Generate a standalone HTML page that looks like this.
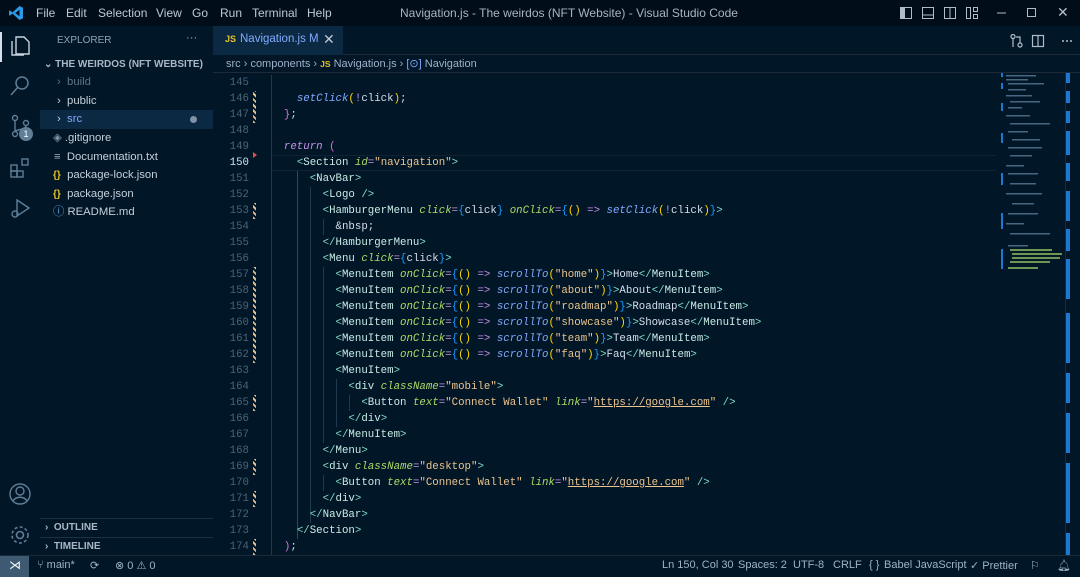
<!DOCTYPE html>
<html><head><meta charset="utf-8"><style>
*{margin:0;padding:0;box-sizing:border-box}
body{width:1080px;height:577px;overflow:hidden;background:#011627;font-family:"Liberation Sans",sans-serif;position:relative;color:#d6deeb}
.abs{position:absolute}
#title{left:0;top:0;width:1080px;height:26px;background:#010e1a;font-size:12px;color:#c0c8d2}
#title span{position:absolute;top:6px}
#act{left:0;top:26px;width:40px;height:529px;background:#011627}
#side{left:40px;top:26px;width:173px;height:529px;background:#011627;font-size:11.3px;color:#c5d0db}
#side .r{position:absolute;left:0;width:173px;height:19px;line-height:19px}
#tabs{left:213px;top:26px;width:867px;height:29px;background:#011627;border-bottom:1px solid #1c2a3a}
#crumb{left:213px;top:55px;width:867px;height:18px;font-size:11px;color:#9fb0c8}
#code{left:271px;top:75px;font-family:"Liberation Mono",monospace;font-size:10.75px;line-height:16px;white-space:pre;color:#d6deeb}
#nums{left:213px;top:75px;width:36px;text-align:right;font-family:"Liberation Mono",monospace;font-size:10.75px;line-height:16px;color:#4b6479;white-space:pre}
.p{color:#7fdbca}.t{color:#caece6}.a{color:#addb67;font-style:italic}.s{color:#ecc48d}.b{color:#179fff}.y{color:#ffd700}.k{color:#c792ea}.f{color:#82aaff;font-style:italic}.m{color:#c792ea;font-style:italic}.u{text-decoration:underline;text-decoration-color:#ecc48d}.pk{color:#da70d6}
#status{left:0;top:555px;width:1080px;height:22px;background:#011627;border-top:1px solid #1c2a3a;font-size:11px;color:#9fb3c8}
#status span{position:absolute;top:3px}
.mod{position:absolute;left:253px;width:3px;background:repeating-linear-gradient(45deg,#e2c08d 0 2px,transparent 2px 4px)}
.g{position:absolute;width:1px;background:#1f3a4f}
</style></head><body>
<div id="title" class="abs">
<svg class="abs" style="left:8px;top:5px" width="16" height="16" viewBox="0 0 16 16"><path d="M11.5 1 L15 2.7 V13.3 L11.5 15 L4.5 8.6 L1.9 10.6 L1 10.1 V5.9 L1.9 5.4 L4.5 7.4 Z M11.5 4.8 L7.3 8 L11.5 11.2 Z" fill="#2b9be8"/></svg>
<span style="left:36px">File</span><span style="left:66px">Edit</span><span style="left:98px">Selection</span><span style="left:156px">View</span><span style="left:192px">Go</span><span style="left:220px">Run</span><span style="left:252px">Terminal</span><span style="left:307px">Help</span>
<span style="left:400px;color:#a8b4c0">Navigation.js - The weirdos (NFT Website) - Visual Studio Code</span>
<svg class="abs" style="left:900px;top:7px" width="140" height="13"><g fill="none" stroke="#b0bcc8"><rect x="0.5" y="0.5" width="11" height="11"/><rect x="0.5" y="0.5" width="4" height="11" fill="#b0bcc8"/><rect x="22.5" y="0.5" width="11" height="11"/><line x1="22" y1="8" x2="34" y2="8"/><rect x="44.5" y="0.5" width="11" height="11"/><line x1="50" y1="0" x2="50" y2="12"/><rect x="66.5" y="0.5" width="4" height="11"/><rect x="73.5" y="0.5" width="4" height="4"/><rect x="73.5" y="7.5" width="4" height="4"/><line x1="97" y1="6" x2="106" y2="6"/><rect x="127.5" y="1.5" width="8" height="8"/></g></svg>
<span style="left:1057px;top:4px;font-size:14px;color:#b0bcc8">✕</span>
</div>
<div id="act" class="abs">
<div class="abs" style="left:0;top:6px;width:2px;height:30px;background:#d6deeb"></div>
<svg class="abs" style="left:9px;top:8px" width="22" height="24" fill="none" stroke="#c8d3de" stroke-width="1.4"><path d="M7 3h8l5 5v12H7z M3 7v14h12"/></svg>
<svg class="abs" style="left:9px;top:48px" width="22" height="24" fill="none" stroke="#5f7e97" stroke-width="1.5"><circle cx="13" cy="9" r="6"/><line x1="9" y1="13" x2="2" y2="21"/></svg>
<svg class="abs" style="left:9px;top:88px" width="26" height="30" fill="none" stroke="#5f7e97" stroke-width="1.4"><circle cx="6" cy="4" r="2.5"/><circle cx="6" cy="20" r="2.5"/><circle cx="17" cy="9" r="2.5"/><path d="M6 7v10 M17 12c0 4-11 3-11 6"/></svg>
<div class="abs" style="left:19px;top:101px;width:14px;height:14px;border-radius:7px;background:#5f7e97;color:#fff;font-size:9px;text-align:center;line-height:14px">1</div>
<svg class="abs" style="left:9px;top:130px" width="24" height="24" fill="none" stroke="#5f7e97" stroke-width="1.4"><rect x="2" y="9" width="6" height="6"/><rect x="2" y="15" width="6" height="6"/><rect x="8" y="15" width="6" height="6"/><rect x="13" y="3" width="6" height="6"/></svg>
<svg class="abs" style="left:9px;top:170px" width="24" height="24" fill="none" stroke="#5f7e97" stroke-width="1.4"><path d="M8 4l12 8-12 8z"/><circle cx="6" cy="18" r="3"/></svg>
<svg class="abs" style="left:9px;top:456px" width="24" height="24" fill="none" stroke="#5f7e97" stroke-width="1.4"><circle cx="11" cy="12" r="10"/><circle cx="11" cy="9" r="4"/><path d="M4 19c3-5 11-5 14 0"/></svg>
<svg class="abs" style="left:9px;top:497px" width="24" height="24" fill="none" stroke="#5f7e97" stroke-width="1.6"><circle cx="11" cy="12" r="3.5"/><circle cx="11" cy="12" r="8" stroke-dasharray="3 2.3"/></svg>
</div>
<div id="side" class="abs">
<div class="r" style="top:5px;left:17px;font-size:10px;color:#8fa3b8">EXPLORER</div>
<div class="r" style="top:3px;left:146px;color:#a0b0c0">···</div>
<div class="r" style="top:29px;left:4px;font-size:10px;font-weight:bold;color:#a9b8c8">⌄ THE WEIRDOS (NFT WEBSITE)</div>
<div class="r" style="top:47px;left:17px;color:#5f7389">›&nbsp; build</div>
<div class="r" style="top:66px;left:17px">›&nbsp; public</div>
<div class="r" style="top:84px;left:0;background:#0b2942"><span style="position:absolute;left:17px">›&nbsp; <span style="color:#82aaff">src</span></span><span style="position:absolute;left:150px;top:6px;width:7px;height:7px;border-radius:4px;background:#7f93a8"></span></div>
<div class="r" style="top:103px;left:13px"><span style="color:#7f93a8">◈</span> .gitignore</div>
<div class="r" style="top:122px;left:14px"><span style="color:#a0b0c0">≡</span>&nbsp; Documentation.txt</div>
<div class="r" style="top:140px;left:13px"><span style="color:#e6c229;font-weight:bold;font-size:10px">{}</span>&nbsp; package-lock.json</div>
<div class="r" style="top:159px;left:13px"><span style="color:#e6c229;font-weight:bold;font-size:10px">{}</span>&nbsp; package.json</div>
<div class="r" style="top:177px;left:13px"><span style="color:#6ca8e0">ⓘ</span> README.md</div>
<div class="abs" style="left:0;top:492px;width:173px;height:1px;background:#1c3146"></div>
<div class="r" style="top:492px;left:5px;font-size:10px;font-weight:bold;color:#a9b8c8">›&nbsp; OUTLINE</div>
<div class="abs" style="left:0;top:511px;width:173px;height:1px;background:#1c3146"></div>
<div class="r" style="top:511px;left:5px;font-size:10px;font-weight:bold;color:#a9b8c8">›&nbsp; TIMELINE</div>
</div>
<div id="tabs" class="abs">
<div class="abs" style="left:0;top:0;width:130px;height:29px;background:#0b2942;font-size:11.5px">
<span class="abs" style="left:12px;top:8px;font-size:9px;font-weight:bold;color:#e6c229">JS</span>
<span class="abs" style="left:27px;top:7px;color:#82aaff">Navigation.js M</span>
<span class="abs" style="left:110px;top:5px;font-size:14px;color:#c0c8d2">✕</span></div>
<svg class="abs" style="left:797px;top:8px" width="70" height="14" fill="none" stroke="#b0bcc8" stroke-width="1.2"><circle cx="3" cy="2.5" r="2"/><circle cx="10" cy="11" r="2"/><path d="M3 5v8 M10 9V3H6"/><rect x="22.5" y="1.5" width="11" height="11"/><line x1="28" y1="1" x2="28" y2="13"/><g fill="#b0bcc8" stroke="none"><circle cx="53" cy="7" r="1"/><circle cx="57" cy="7" r="1"/><circle cx="61" cy="7" r="1"/></g></svg>
</div>
<div id="crumb" class="abs"><span class="abs" style="left:13px;top:2px">src › components › <b style="font-size:8.5px;color:#e6c229">JS</b> Navigation.js › <span style="color:#82aaff">[⊙]</span> Navigation</span></div>
<div class="abs" style="left:213px;top:72px;width:867px;height:1px;background:#1c2a3a"></div>
<div class="abs" style="left:271px;top:155px;width:725px;height:16px;border-top:1px solid #0f2236;border-bottom:1px solid #0f2236"></div>
<div id="nums" class="abs">145
146
147
148
149
<span style="color:#c5e4fd">150</span>
151
152
153
154
155
156
157
158
159
160
161
162
163
164
165
166
167
168
169
170
171
172
173
174</div>
<div class="mod" style="top:91px;height:32px"></div>
<div class="mod" style="top:203px;height:16px"></div>
<div class="mod" style="top:267px;height:96px"></div>
<div class="mod" style="top:395px;height:16px"></div>
<div class="mod" style="top:459px;height:16px"></div>
<div class="mod" style="top:491px;height:16px"></div>
<div class="mod" style="top:539px;height:16px"></div>
<div class="abs" style="left:253px;top:152px;width:0;height:0;border-left:4px solid #e04f4f;border-top:3px solid transparent;border-bottom:3px solid transparent"></div>
<div class="g" style="left:271px;top:75px;height:480px"></div>
<div class="g" style="left:297px;top:171px;height:368px;background:#2c4a60"></div>
<div class="g" style="left:310px;top:187px;height:336px"></div>
<div class="g" style="left:323px;top:219px;height:16px"></div>
<div class="g" style="left:323px;top:267px;height:176px"></div>
<div class="g" style="left:336px;top:379px;height:48px"></div>
<div class="g" style="left:349px;top:395px;height:16px"></div>
<div class="g" style="left:323px;top:475px;height:16px"></div>
<div id="code" class="abs">
    <span class="f">setClick</span><span class="y">(</span><span class="k">!</span>click<span class="y">)</span>;
  <span class="pk">}</span>;

  <span class="m">return</span> <span class="pk">(</span>
    <span class="p">&lt;</span><span class="t">Section</span> <span class="a">id</span><span class="k">=</span><span class="s">"navigation"</span><span class="p">&gt;</span>
      <span class="p">&lt;</span><span class="t">NavBar</span><span class="p">&gt;</span>
        <span class="p">&lt;</span><span class="t">Logo</span> <span class="p">/&gt;</span>
        <span class="p">&lt;</span><span class="t">HamburgerMenu</span> <span class="a">click</span><span class="k">=</span><span class="b">{</span>click<span class="b">}</span> <span class="a">onClick</span><span class="k">=</span><span class="b">{</span><span class="y">()</span> <span class="k">=&gt;</span> <span class="f">setClick</span><span class="y">(</span><span class="k">!</span>click<span class="y">)</span><span class="b">}</span><span class="p">&gt;</span>
          &amp;nbsp;
        <span class="p">&lt;/</span><span class="t">HamburgerMenu</span><span class="p">&gt;</span>
        <span class="p">&lt;</span><span class="t">Menu</span> <span class="a">click</span><span class="k">=</span><span class="b">{</span>click<span class="b">}</span><span class="p">&gt;</span>
          <span class="p">&lt;</span><span class="t">MenuItem</span> <span class="a">onClick</span><span class="k">=</span><span class="b">{</span><span class="y">()</span> <span class="k">=&gt;</span> <span class="f">scrollTo</span><span class="y">(</span><span class="s">"home"</span><span class="y">)</span><span class="b">}</span><span class="p">&gt;</span>Home<span class="p">&lt;/</span><span class="t">MenuItem</span><span class="p">&gt;</span>
          <span class="p">&lt;</span><span class="t">MenuItem</span> <span class="a">onClick</span><span class="k">=</span><span class="b">{</span><span class="y">()</span> <span class="k">=&gt;</span> <span class="f">scrollTo</span><span class="y">(</span><span class="s">"about"</span><span class="y">)</span><span class="b">}</span><span class="p">&gt;</span>About<span class="p">&lt;/</span><span class="t">MenuItem</span><span class="p">&gt;</span>
          <span class="p">&lt;</span><span class="t">MenuItem</span> <span class="a">onClick</span><span class="k">=</span><span class="b">{</span><span class="y">()</span> <span class="k">=&gt;</span> <span class="f">scrollTo</span><span class="y">(</span><span class="s">"roadmap"</span><span class="y">)</span><span class="b">}</span><span class="p">&gt;</span>Roadmap<span class="p">&lt;/</span><span class="t">MenuItem</span><span class="p">&gt;</span>
          <span class="p">&lt;</span><span class="t">MenuItem</span> <span class="a">onClick</span><span class="k">=</span><span class="b">{</span><span class="y">()</span> <span class="k">=&gt;</span> <span class="f">scrollTo</span><span class="y">(</span><span class="s">"showcase"</span><span class="y">)</span><span class="b">}</span><span class="p">&gt;</span>Showcase<span class="p">&lt;/</span><span class="t">MenuItem</span><span class="p">&gt;</span>
          <span class="p">&lt;</span><span class="t">MenuItem</span> <span class="a">onClick</span><span class="k">=</span><span class="b">{</span><span class="y">()</span> <span class="k">=&gt;</span> <span class="f">scrollTo</span><span class="y">(</span><span class="s">"team"</span><span class="y">)</span><span class="b">}</span><span class="p">&gt;</span>Team<span class="p">&lt;/</span><span class="t">MenuItem</span><span class="p">&gt;</span>
          <span class="p">&lt;</span><span class="t">MenuItem</span> <span class="a">onClick</span><span class="k">=</span><span class="b">{</span><span class="y">()</span> <span class="k">=&gt;</span> <span class="f">scrollTo</span><span class="y">(</span><span class="s">"faq"</span><span class="y">)</span><span class="b">}</span><span class="p">&gt;</span>Faq<span class="p">&lt;/</span><span class="t">MenuItem</span><span class="p">&gt;</span>
          <span class="p">&lt;</span><span class="t">MenuItem</span><span class="p">&gt;</span>
            <span class="p">&lt;</span><span class="t">div</span> <span class="a">className</span><span class="k">=</span><span class="s">"mobile"</span><span class="p">&gt;</span>
              <span class="p">&lt;</span><span class="t">Button</span> <span class="a">text</span><span class="k">=</span><span class="s">"Connect Wallet"</span> <span class="a">link</span><span class="k">=</span><span class="s">"<span class="u">https://google.com</span>"</span> <span class="p">/&gt;</span>
            <span class="p">&lt;/</span><span class="t">div</span><span class="p">&gt;</span>
          <span class="p">&lt;/</span><span class="t">MenuItem</span><span class="p">&gt;</span>
        <span class="p">&lt;/</span><span class="t">Menu</span><span class="p">&gt;</span>
        <span class="p">&lt;</span><span class="t">div</span> <span class="a">className</span><span class="k">=</span><span class="s">"desktop"</span><span class="p">&gt;</span>
          <span class="p">&lt;</span><span class="t">Button</span> <span class="a">text</span><span class="k">=</span><span class="s">"Connect Wallet"</span> <span class="a">link</span><span class="k">=</span><span class="s">"<span class="u">https://google.com</span>"</span> <span class="p">/&gt;</span>
        <span class="p">&lt;/</span><span class="t">div</span><span class="p">&gt;</span>
      <span class="p">&lt;/</span><span class="t">NavBar</span><span class="p">&gt;</span>
    <span class="p">&lt;/</span><span class="t">Section</span><span class="p">&gt;</span>
  <span class="pk">)</span>;</div>
<svg class="abs" style="left:1000px;top:73px" width="80" height="482">
<g fill="#5a7a96" opacity="0.8">
<rect x="6" y="2" width="30" height="1.5"/><rect x="6" y="6" width="22" height="1.5"/><rect x="8" y="10" width="36" height="1.5"/><rect x="8" y="16" width="18" height="1.5"/><rect x="6" y="22" width="26" height="1.5"/><rect x="10" y="28" width="30" height="1.5"/><rect x="8" y="34" width="14" height="1.5"/><rect x="6" y="42" width="24" height="1.5"/><rect x="10" y="50" width="40" height="1.5"/><rect x="8" y="58" width="20" height="1.5"/><rect x="12" y="66" width="28" height="1.5"/><rect x="8" y="74" width="34" height="1.5"/><rect x="10" y="82" width="22" height="1.5"/><rect x="6" y="92" width="18" height="1.5"/><rect x="8" y="100" width="30" height="1.5"/><rect x="10" y="110" width="26" height="1.5"/><rect x="6" y="120" width="36" height="1.5"/><rect x="12" y="130" width="22" height="1.5"/><rect x="8" y="140" width="30" height="1.5"/><rect x="6" y="150" width="18" height="1.5"/><rect x="10" y="160" width="40" height="1.5"/><rect x="8" y="172" width="20" height="1.5"/>
</g>
<g fill="#8ab860" opacity="0.8"><rect x="10" y="176" width="42" height="2"/><rect x="12" y="180" width="50" height="2"/><rect x="12" y="184" width="48" height="2"/><rect x="10" y="188" width="40" height="2"/><rect x="8" y="194" width="30" height="2"/></g>
<g fill="#1e78d2"><rect x="1" y="0" width="2" height="4"/><rect x="1" y="10" width="2" height="6"/><rect x="1" y="30" width="2" height="8"/><rect x="1" y="60" width="2" height="10"/><rect x="1" y="100" width="2" height="12"/><rect x="1" y="140" width="2" height="16"/><rect x="1" y="176" width="2" height="20"/>
<rect x="66" y="0" width="4" height="10"/><rect x="66" y="18" width="4" height="12"/><rect x="66" y="38" width="4" height="12"/><rect x="66" y="58" width="4" height="24"/><rect x="66" y="90" width="4" height="18"/><rect x="66" y="118" width="4" height="30"/><rect x="66" y="156" width="4" height="22"/><rect x="66" y="186" width="4" height="40"/><rect x="66" y="240" width="4" height="50"/><rect x="66" y="300" width="4" height="30"/><rect x="66" y="340" width="4" height="40"/><rect x="66" y="390" width="4" height="60"/><rect x="66" y="460" width="4" height="22"/></g>
</svg>
<div class="abs" style="left:1065px;top:73px;width:1px;height:482px;background:#1c2a3a"></div>
<div id="status" class="abs">
<div class="abs" style="left:0;top:0;width:29px;height:21px;background:#3d5a72"></div>
<span style="left:9px;top:2px;color:#fff;font-size:12px">⋊</span>
<span style="left:37px">⑂ main*</span><span style="left:90px">⟳</span><span style="left:115px">⊗ 0 ⚠ 0</span>
<span style="left:662px">Ln 150, Col 30</span><span style="left:738px">Spaces: 2</span><span style="left:793px">UTF-8</span><span style="left:833px">CRLF</span><span style="left:869px">{ }</span><span style="left:884px">Babel JavaScript</span><span style="left:970px">✓ Prettier</span><span style="left:1030px">⚐</span><span style="left:1057px">🔔︎</span>
</div>
</body></html>
